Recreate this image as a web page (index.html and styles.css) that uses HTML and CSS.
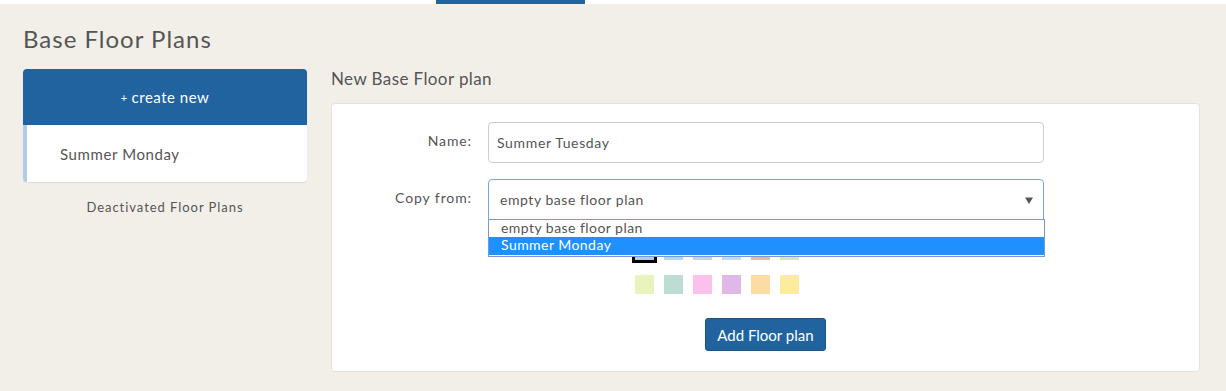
FILE: index.html
```html
<!DOCTYPE html>
<html>
<head>
<meta charset="utf-8">
<link rel="stylesheet" href="styles.css">
</head>
<body>
<div class="topbar"><div class="topbar-active"></div></div>
<div class="page">
  <h1 class="title">Base Floor Plans</h1>
  <div class="layout">
    <aside class="sidebar">
      <div class="panel">
        <div class="create"><span class="plus">+</span> create new</div>
        <div class="item">Summer Monday</div>
      </div>
      <div class="deact">Deactivated Floor Plans</div>
    </aside>
    <main class="main">
      <h2 class="subtitle">New Base Floor plan</h2>
      <div class="card">
        <div class="row">
          <label class="label">Name:</label>
          <div class="control input">Summer Tuesday</div>
        </div>
        <div class="row">
          <label class="label">Copy from:</label>
          <div class="select-wrap">
            <div class="control select">
              <span>empty base floor plan</span>
              <svg class="arrow" width="8" height="8" viewBox="0 0 8 8"><path d="M0 1.5 H8 L4 8 Z" fill="#555"/></svg>
            </div>
            <div class="dropdown">
              <div class="opt">empty base floor plan</div>
              <div class="opt sel">Summer Monday</div>
            </div>
          </div>
        </div>
        <div class="row">
          <div></div>
          <div class="swatches">
            <span class="sw active" style="background:#b0cce4"></span>
            <span class="sw" style="background:#a8dce8"></span>
            <span class="sw" style="background:#c0d4e4"></span>
            <span class="sw" style="background:#bcdcf4"></span>
            <span class="sw" style="background:#e8b8b4"></span>
            <span class="sw" style="background:#d4e8b8"></span>
            <span class="sw" style="background:#e8f4bc"></span>
            <span class="sw" style="background:#bcdcd4"></span>
            <span class="sw" style="background:#fcc0ec"></span>
            <span class="sw" style="background:#e0b8e8"></span>
            <span class="sw" style="background:#fcdca4"></span>
            <span class="sw" style="background:#fcec9c"></span>
          </div>
        </div>
        <div class="actions">
          <button class="btn">Add Floor plan</button>
        </div>
      </div>
    </main>
  </div>
</div>
</body>
</html>
```
FILE: styles.css
```css
* { box-sizing: border-box; }
html, body { margin: 0; padding: 0; }
body {
  background: #f2efe9;
  font-family: Lato, "Open Sans", sans-serif;
  color: #555;
  height: 391px;
  overflow: hidden;
}
.topbar {
  height: 4px;
  background: #fff;
  padding-left: 436px;
}
.topbar-active {
  width: 149px;
  height: 4px;
  background: #21639e;
}
.page {
  padding: 0 26px 0 23px;
}
.title {
  margin: 0;
  padding-top: 20px;
  height: 65px;
  font-weight: 400;
  font-size: 24px;
  letter-spacing: 1px;
  color: #555;
  line-height: 30px;
}
.layout {
  display: flex;
  gap: 24px;
}
.sidebar {
  width: 284px;
  flex: none;
}
.panel {
  background: #fff;
  border-radius: 4px;
  box-shadow: 0 1px 1px rgba(0,0,0,0.08);
  overflow: hidden;
}
.create {
  height: 56px;
  background: #21639e;
  color: #fff;
  font-size: 15px;
  letter-spacing: 0.5px;
  display: flex;
  align-items: center;
  justify-content: center;
}
.plus { font-size: 11px; margin-right: 4px; }
.item {
  height: 57px;
  border-left: 4px solid #aecbe8;
  padding-left: 33px;
  display: flex;
  align-items: center;
  font-size: 15px;
  letter-spacing: 0.6px;
  color: #555;
}
.deact {
  text-align: center;
  font-size: 13px;
  letter-spacing: 0.95px;
  color: #555;
  margin-top: 17px;
}
.main {
  flex: 1;
}
.subtitle {
  margin: 0;
  font-weight: 400;
  font-size: 17px;
  letter-spacing: 0.4px;
  line-height: 20px;
  height: 34px;
  color: #555;
}
.card {
  background: #fff;
  border: 1px solid #e6e2da;
  border-radius: 4px;
  padding: 18px 0 18px 0;
  height: 269px;
}
.row {
  display: grid;
  grid-template-columns: 140px 556px;
  column-gap: 16px;
  align-items: center;
  margin-bottom: 16px;
}
.label {
  text-align: right;
  font-size: 14px;
  letter-spacing: 0.9px;
  color: #555;
  align-self: start;
  padding-top: 10px;
}
.control {
  height: 41px;
  border: 1px solid #ccc;
  border-radius: 4px;
  font-size: 14px;
  letter-spacing: 0.65px;
  color: #555;
  display: flex;
  align-items: center;
  padding-left: 8px;
}
.select-wrap { position: relative; }
.select {
  border-color: #74a9e0;
  border-bottom-left-radius: 0;
  border-bottom-right-radius: 0;
  padding-left: 11px;
  padding-right: 10px;
  justify-content: space-between;
  letter-spacing: 0.55px;
}
.arrow { margin-top: 1px; }
.dropdown {
  position: absolute;
  left: 0;
  right: -1px;
  top: 40px;
  background: #fff;
  border: 1px solid #7a98cc;
  padding-bottom: 1px;
  z-index: 2;
}
.opt {
  height: 17px;
  line-height: 16px;
  font-size: 14px;
  letter-spacing: 0.45px;
  color: #555;
  padding-left: 12px;
}
.opt.sel {
  height: 18px;
  background: #1e90ff;
  color: #fff;
}
.swatches {
  display: grid;
  grid-template-columns: repeat(6, 19px);
  column-gap: 10px;
  row-gap: 15px;
  margin-left: 147px;
  margin-top: 5px;
}
.sw {
  display: block;
  width: 19px;
  height: 19px;
}
.sw.active {
  outline: 3px solid #000;
}
.actions {
  display: flex;
  justify-content: center;
  margin-top: 24px;
}
.btn {
  font-family: inherit;
  background: #21639e;
  color: #fff;
  border: 1px solid #1b5585;
  border-radius: 3px;
  height: 33px;
  padding: 0 11px;
  font-size: 15px;
  letter-spacing: 0;
}
```
